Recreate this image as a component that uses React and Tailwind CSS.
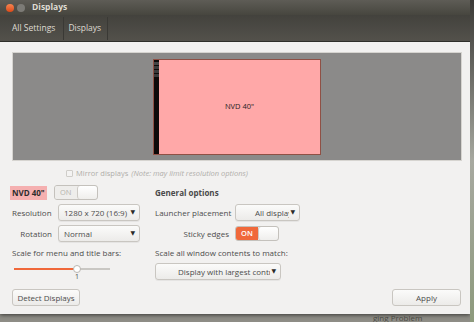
import React from 'react';

const FONT = { fontFamily: '"Open Sans", "DejaVu Sans", sans-serif' };

function Combo({ text, className = '', indent = 5 }) {
  return (
    <div
      className={
        'flex items-center h-[17px] rounded-[3px] border border-[#c9c6c1] bg-gradient-to-b from-[#fbfbfa] to-[#ecebe9] pr-[4px] text-[#4c4c4c] shadow-[0_1px_0_rgba(0,0,0,0.05)] ' +
        className
      }
    >
      <span className="flex-1 overflow-hidden whitespace-nowrap" style={{ paddingLeft: indent }}>
        {text}
      </span>
      <span className="ml-[1px] text-[6px] text-[#2a2a2a]">▼</span>
    </div>
  );
}

function Switch({ on }) {
  return (
    <div className="flex h-[15px] w-[44px] overflow-hidden rounded-[3px] border border-[#c4c1bc] bg-[#e9e8e6]">
      {on ? (
        <div className="flex w-[22px] items-center justify-center bg-[#f0683a] text-[7.5px] font-semibold text-white">ON</div>
      ) : (
        <div className="flex w-[22px] items-center justify-center bg-[#eeedeb] text-[7.5px] text-[#b5b3ae]">ON</div>
      )}
      <div className="flex-1 rounded-[3px] border-l border-[#cdcac5] bg-gradient-to-b from-[#ffffff] to-[#efeeec]" />
    </div>
  );
}

export default function App() {
  return (
    <div className="relative h-[322px] w-[474px] overflow-hidden bg-[#8e8d86]" style={FONT}>
      {/* desktop behind the window */}
      <div className="absolute right-0 top-0 h-full w-[4px] bg-gradient-to-b from-[#3b3a37] via-[#a7a9a0] to-[#8d9a7c]" />
      <div className="absolute left-[373px] top-[314px] text-[8px] leading-none text-[#4a4a44]">ging Problem</div>

      {/* window */}
      <div className="flex h-[314px] w-[470px] flex-col bg-[#f2f1f0] shadow-[0_1px_4px_rgba(0,0,0,0.6)] text-[8px] text-[#4c4c4c]">
        {/* title bar */}
        <div className="flex h-[15px] items-center bg-gradient-to-b from-[#5e5c56] to-[#47463f] pl-[6px]">
          <div className="h-[8px] w-[8px] rounded-full bg-gradient-to-b from-[#f6844f] to-[#dd4814]" />
          <div className="ml-[3px] h-[8px] w-[8px] rounded-full bg-[#7c7b76]" />
          <div className="ml-[7px] text-[8.5px] font-bold text-[#dfdbd2]">Displays</div>
        </div>

        {/* toolbar */}
        <div className="flex h-[27px] items-center border-b border-[#2f2e2a] bg-gradient-to-b from-[#43423d] to-[#53514b] pl-[8px]">
          <div className="flex h-[23px] items-center border-r border-[#3a3935] pr-[4px] text-[8.5px] text-[#dfdbd2]">
            <span className="px-[4px]">All Settings</span>
          </div>
          <div className="flex h-[23px] items-center border-r border-[#3a3935] pl-[2px] pr-[4px] text-[8.5px] text-[#dfdbd2]">
            <span className="px-[2px]">Displays</span>
          </div>
        </div>

        {/* monitor preview */}
        <div className="relative ml-[12px] mt-[10px] h-[109px] w-[450px] border border-[#d6d4d0] bg-[#8b8a89]">
          <div className="absolute left-[140px] top-[6px] flex h-[96px] w-[168px] border border-[#8f5045] bg-[#ffa8a8]">
            <div className="flex w-[5px] flex-col gap-[1px] bg-[#0d0908] pt-[2px]">
              <div className="h-[3px] bg-[#444]" />
              <div className="h-[3px] bg-[#3a3a3a]" />
              <div className="h-[3px] bg-[#3a3a3a]" />
              <div className="h-[3px] bg-[#3a3a3a]" />
            </div>
            <div className="flex flex-1 items-center justify-center text-[7.5px] text-[#2a1f1f]">NVD 40"</div>
          </div>
        </div>

        {/* mirror */}
        <div className="mt-[7px] flex items-center pl-[66px] text-[7.5px] text-[#b0aeaa]">
          <div className="mr-[3px] h-[7px] w-[7px] rounded-[1px] border border-[#cfcdc9] bg-[#f4f3f2]" />
          <span>Mirror displays</span>
          <span className="ml-[3px] italic">(Note: may limit resolution options)</span>
        </div>

        {/* settings */}
        <div className="mt-[6px] flex">
          <div className="flex w-[143px] flex-col pl-[10px]">
            <div className="flex h-[15px] items-center">
              <div className="flex h-[14px] items-center bg-[#f5b0b0] px-[2px] font-bold text-[#2d2d2d]">NVD 40"</div>
              <div className="ml-[7px]">
                <Switch on={false} />
              </div>
            </div>
            <div className="mt-[4px] flex h-[17px] items-center">
              <span className="w-[48px] pl-[2px]">Resolution</span>
              <Combo text="1280 x 720 (16:9)" className="w-[82px]" />
            </div>
            <div className="mt-[4px] flex h-[17px] items-center">
              <span className="w-[48px] pr-[6px] text-right">Rotation</span>
              <Combo text="Normal" className="w-[82px]" />
            </div>
            <div className="mt-[5px] pl-[2px]">Scale for menu and title bars:</div>
            <div className="relative mt-[6px] ml-[4px] h-[8px] w-[96px]">
              <div className="absolute left-0 top-[3px] h-[2px] w-[96px] bg-[#c9c7c3]" />
              <div className="absolute left-0 top-[3px] h-[2px] w-[63px] bg-[#f0683a]" />
              <div className="absolute left-[59px] top-0 h-[8px] w-[8px] rounded-full border border-[#b9b6b1] bg-white" />
            </div>
            <div className="ml-[65px] text-[7px] leading-[8px]">1</div>
          </div>

          <div className="flex w-[160px] flex-col pl-[12px]">
            <div className="flex h-[15px] items-center font-bold text-[#4a4a4a]">General options</div>
            <div className="mt-[4px] flex h-[17px] items-center">
              <span className="w-[80px]">Launcher placement</span>
              <Combo text="All displays" className="w-[65px]" indent={19} />
            </div>
            <div className="mt-[4px] flex h-[17px] items-center">
              <span className="w-[74px] text-right">Sticky edges</span>
              <div className="ml-[6px]">
                <Switch on />
              </div>
            </div>
            <div className="mt-[5px]">Scale all window contents to match:</div>
            <Combo text="Display with largest controls" className="mt-[4px] w-[126px]" indent={22} />
          </div>
        </div>

        {/* buttons */}
        <div className="mt-auto mb-[8px] flex justify-between px-[12px] pr-[9px]">
          <div className="flex h-[17px] w-[68px] items-center justify-center rounded-[3px] border border-[#c9c6c1] bg-gradient-to-b from-[#fbfbfa] to-[#ecebe9]">
            Detect Displays
          </div>
          <div className="flex h-[17px] w-[69px] items-center justify-center rounded-[3px] border border-[#c9c6c1] bg-gradient-to-b from-[#fbfbfa] to-[#ecebe9]">
            Apply
          </div>
        </div>
      </div>
    </div>
  );
}
